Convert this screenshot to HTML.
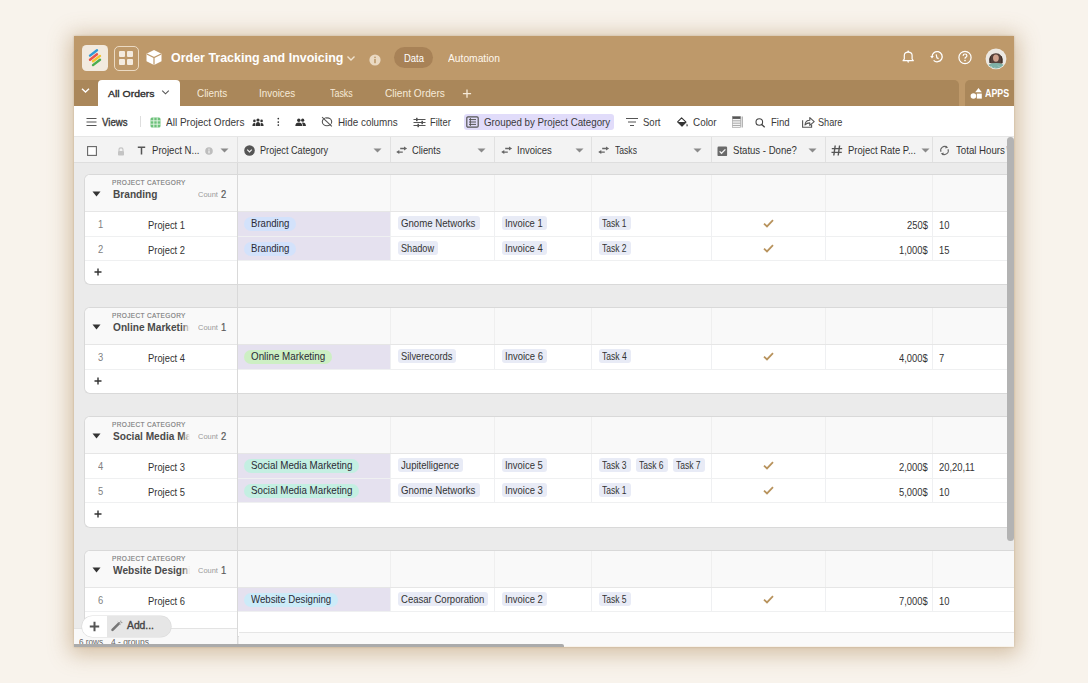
<!DOCTYPE html>
<html><head><meta charset="utf-8"><style>
*{margin:0;padding:0}
html,body{width:1088px;height:683px;overflow:hidden}
body{background:#f8f3ec;position:relative;font-family:"Liberation Sans", sans-serif}
.b{position:absolute}
.t{position:absolute;white-space:nowrap}
svg.b{overflow:visible}
</style></head><body>
<div class="b" style="left:74px;top:36px;width:940px;height:610.5px;box-shadow:0 3px 20px 4px rgba(165,122,70,.44),0 0 2px rgba(150,110,60,.35)"></div>
<div class="b" style="left:74px;top:36px;width:940px;height:610.5px;overflow:hidden">
<div class="b" style="left:-74px;top:-36px;width:1088px;height:683px">
<div class="b" style="left:74px;top:36px;width:940.00px;height:44.00px;background:#be996a"></div>
<div class="b" style="left:82px;top:45px;width:26.00px;height:26.00px;background:#f2eadf;border-radius:4.5px"></div>
<svg class="b" style="left:82px;top:45px" width="26" height="26" viewBox="0 0 26 26"><g stroke-linecap="round" stroke-width="2.4"><line x1="8" y1="10.6" x2="15" y2="5.3" stroke="#2f9ad6"/><line x1="8" y1="14.7" x2="15" y2="9.3" stroke="#e9544c"/><line x1="11" y1="16.3" x2="18" y2="10.9" stroke="#f3c430"/><line x1="11" y1="20.1" x2="18" y2="14.8" stroke="#4aad4f"/></g></svg>
<div class="b" style="left:114px;top:46px;width:25.00px;height:25.00px;border:1.3px solid rgba(250,240,225,.75);border-radius:5px;box-sizing:border-box"></div>
<div class="b" style="left:119px;top:51px;width:6.00px;height:6.00px;background:#f4ebdf;border-radius:1px"></div>
<div class="b" style="left:127px;top:51px;width:6.00px;height:6.00px;background:#f4ebdf;border-radius:1px"></div>
<div class="b" style="left:119px;top:58.5px;width:6.00px;height:6.00px;background:#f4ebdf;border-radius:1px"></div>
<div class="b" style="left:127px;top:58.5px;width:6.00px;height:6.00px;background:#f4ebdf;border-radius:1px"></div>
<svg class="b" style="left:145px;top:49px" width="18" height="17" viewBox="0 0 18 17"><path d="M9 1 L16.5 4.8 L16.5 12.3 L9 16 L1.5 12.3 L1.5 4.8 Z" fill="#fff"/><path d="M1.8 5 L9 8.6 L16.2 5 M9 8.6 L9 15.8" stroke="#be996a" stroke-width="1.2" fill="none"/></svg>
<div class="t" style="left:170.70px;top:52.14px;font-size:12.35px;line-height:12.35px;color:#fff;font-weight:700;transform:scaleX(1.0091);transform-origin:0 0;">Order Tracking and Invoicing</div>
<svg class="b" style="left:346px;top:55px" width="10" height="7" viewBox="0 0 10 7"><path d="M1.5 1.5 L5 5 L8.5 1.5" stroke="#f1e3cf" stroke-width="1.4" fill="none"/></svg>
<svg class="b" style="left:369px;top:54px" width="12" height="12" viewBox="0 0 12 12"><circle cx="6" cy="6" r="5.6" fill="#ead9c2"/><rect x="5.2" y="5" width="1.6" height="4.2" fill="#be996a"/><circle cx="6" cy="3.3" r="0.9" fill="#be996a"/></svg>
<div class="b" style="left:394px;top:47px;width:39.00px;height:21.00px;background:#a88257;border-radius:11px"></div>
<div class="t" style="left:403.70px;top:52.80px;font-size:10.76px;line-height:10.76px;color:#fff;transform:scaleX(0.8756);transform-origin:0 0;">Data</div>
<div class="t" style="left:448.40px;top:52.80px;font-size:10.76px;line-height:10.76px;color:#fff7ec;transform:scaleX(0.9538);transform-origin:0 0;">Automation</div>
<svg class="b" style="left:902px;top:50px" width="12" height="14" viewBox="0 0 12 14"><circle cx="6.2" cy="1.3" r="0.9" fill="#fff"/><path d="M2.3 9 V5.6 Q2.3 2.2 6.2 2.2 Q10.1 2.2 10.1 5.6 V9 L11.3 10.7 H1.1 Z" fill="none" stroke="#fff" stroke-width="1.2" stroke-linejoin="round"/><path d="M5 11.3 L6.2 12.9 L7.4 11.3 Z" fill="#fff"/></svg>
<svg class="b" style="left:930px;top:50px" width="14" height="14" viewBox="0 0 14 14"><path d="M2 6.8 A5.1 5.1 0 1 1 3.6 10.4" fill="none" stroke="#fff" stroke-width="1.3"/><path d="M0.2 5.9 L3.8 5.9 L2 8.4 Z" fill="#fff"/><path d="M6.2 4.4 L6.9 7.9 L8.6 8.6" fill="none" stroke="#fff" stroke-width="1.2"/></svg>
<svg class="b" style="left:958px;top:50px" width="14" height="15" viewBox="0 0 14 15"><circle cx="7" cy="7.5" r="6.1" fill="none" stroke="#fff" stroke-width="1.2"/><path d="M5.1 5.9 Q5.2 4 7 4 Q8.9 4 8.9 5.7 Q8.9 6.8 7.6 7.4 Q7 7.7 7 8.8" fill="none" stroke="#fff" stroke-width="1.2"/><circle cx="7" cy="10.6" r="0.8" fill="#fff"/></svg>
<svg class="b" style="left:985px;top:48px" width="22" height="22" viewBox="0 0 22 22"><defs><clipPath id="av"><circle cx="11" cy="10.9" r="9.6"/></clipPath></defs><circle cx="11" cy="10.9" r="10.4" fill="#f1ebe3"/><g clip-path="url(#av)"><rect width="22" height="22" fill="#ebe8e3"/><path d="M5 15 Q4 9.5 6.3 6.8 Q8.4 5 11.2 5.2 Q14.3 5.3 15.9 7.5 Q17.8 10.2 17.3 15.4 Q14.5 16 11 15.6 Q7.5 16 5 15 Z" fill="#54403a"/><path d="M5 15 Q4.2 11 5.6 8.5 M17 15 Q17.6 11 16.2 8.3" stroke="#3a2a22" stroke-width="1.2" fill="none"/><ellipse cx="10.9" cy="10.1" rx="2.9" ry="3.7" fill="#cfa28e"/><path d="M0.5 22 Q1.5 14.8 11 14.9 Q20.5 14.8 21.5 22 Z" fill="#7fb1a6"/><path d="M6 18 L8 20 M13 17.5 L15 19.5 M9.5 19 L11 21" stroke="#a9cfc6" stroke-width="0.8"/></g></svg>
<div class="b" style="left:74px;top:80px;width:940.00px;height:26.00px;background:#be996a"></div>
<div class="b" style="left:74px;top:80px;width:885.00px;height:26.00px;background:#aa875a;border-top-right-radius:5px"></div>
<div class="b" style="left:959px;top:80px;width:6.00px;height:26.00px;background:#be996a"></div>
<div class="b" style="left:965px;top:80px;width:49.00px;height:26.00px;background:#aa875a;border-top-left-radius:5px"></div>
<svg class="b" style="left:80px;top:87px" width="11" height="7" viewBox="0 0 11 7"><path d="M2 1.8 L5.5 5 L9 1.8" stroke="#fff" stroke-width="1.4" fill="none"/></svg>
<div class="b" style="left:98px;top:80px;width:82.00px;height:27.00px;background:#fff;border-radius:4px 4px 0 0"></div>
<div class="t" style="left:108.40px;top:88.83px;font-size:9.88px;line-height:9.88px;color:#2b2b2b;-webkit-text-stroke:0.35px #2b2b2b;transform:scaleX(1.0584);transform-origin:0 0;">All Orders</div>
<svg class="b" style="left:161px;top:89px" width="9" height="7" viewBox="0 0 9 7"><path d="M1.2 1.6 L4.5 4.8 L7.8 1.6" stroke="#555" stroke-width="1.1" fill="none"/></svg>
<div class="t" style="left:196.90px;top:89.31px;font-size:10.03px;line-height:10.03px;color:#f6ead8;transform:scaleX(0.9883);transform-origin:0 0;">Clients</div>
<div class="t" style="left:259.00px;top:89.31px;font-size:10.03px;line-height:10.03px;color:#f6ead8;transform:scaleX(0.9841);transform-origin:0 0;">Invoices</div>
<div class="t" style="left:330.30px;top:89.31px;font-size:10.03px;line-height:10.03px;color:#f6ead8;transform:scaleX(0.8894);transform-origin:0 0;">Tasks</div>
<div class="t" style="left:385.00px;top:89.31px;font-size:10.03px;line-height:10.03px;color:#f6ead8;transform:scaleX(1.0156);transform-origin:0 0;">Client Orders</div>
<svg class="b" style="left:462px;top:89px" width="10" height="10" viewBox="0 0 10 10"><path d="M5 0.6 V8.8 M0.9 4.7 H9.1" stroke="#f6ead8" stroke-width="1.3"/></svg>
<svg class="b" style="left:970px;top:87px" width="13" height="13" viewBox="0 0 13 13"><path d="M8.5 1 L11.8 5.3 L5.2 5.3 Z" fill="#fff"/><circle cx="3.4" cy="9" r="2.8" fill="#fff"/><rect x="6.8" y="6.6" width="5" height="5" fill="#fff"/></svg>
<div class="t" style="left:984.70px;top:89.11px;font-size:10.03px;line-height:10.03px;color:#fff;font-weight:700;transform:scaleX(0.8825);transform-origin:0 0;">APPS</div>
<div class="b" style="left:74px;top:106px;width:940.00px;height:31.00px;background:#fff"></div>
<div class="b" style="left:74px;top:136px;width:940.00px;height:1.00px;background:#e6e6e6"></div>
<svg class="b" style="left:86px;top:117px" width="11" height="10" viewBox="0 0 11 10"><path d="M0.5 1.5 H10.5 M0.5 5 H10.5 M0.5 8.5 H10.5" stroke="#555" stroke-width="1.2"/></svg>
<div class="t" style="left:102.20px;top:117.79px;font-size:10.17px;line-height:10.17px;color:#3a3a3a;-webkit-text-stroke:0.35px #3a3a3a;transform:scaleX(0.9498);transform-origin:0 0;">Views</div>
<div class="b" style="left:140px;top:116px;width:1.00px;height:11.00px;background:#dedede"></div>
<svg class="b" style="left:150px;top:116.5px" width="11" height="11" viewBox="0 0 11 11"><rect x="0.5" y="0.5" width="10" height="10" rx="1.5" fill="#6cc17a"/><path d="M3.8 0.5 V10.5 M7.2 0.5 V10.5 M0.5 3.8 H10.5 M0.5 7.2 H10.5" stroke="#e6f5e8" stroke-width="0.9"/></svg>
<div class="t" style="left:166.20px;top:117.79px;font-size:10.17px;line-height:10.17px;color:#3a3a3a;transform:scaleX(0.9859);transform-origin:0 0;">All Project Orders</div>
<svg class="b" style="left:251.5px;top:117.5px" width="12" height="9" viewBox="0 0 12 9"><circle cx="6" cy="2" r="1.6" fill="#333"/><circle cx="2.4" cy="2.9" r="1.3" fill="#333"/><circle cx="9.6" cy="2.9" r="1.3" fill="#333"/><path d="M3.6 8 Q3.8 4.1 6 4.1 Q8.2 4.1 8.4 8 Z M0.4 8 Q0.5 4.9 2.4 4.9 Q3.2 4.9 3.4 5.3 L3.1 8 Z M11.6 8 Q11.5 4.9 9.6 4.9 Q8.8 4.9 8.6 5.3 L8.9 8 Z" fill="#333"/></svg>
<svg class="b" style="left:276px;top:116px" width="5" height="12" viewBox="0 0 5 12"><circle cx="2.3" cy="2.6" r="0.85" fill="#333"/><circle cx="2.3" cy="6.1" r="0.85" fill="#333"/><circle cx="2.3" cy="9.1" r="0.85" fill="#333"/></svg>
<svg class="b" style="left:294.5px;top:117.5px" width="12" height="9" viewBox="0 0 12 9"><circle cx="3.8" cy="2.2" r="1.7" fill="#333"/><circle cx="7.7" cy="2.2" r="1.6" fill="#333"/><path d="M0.3 8 Q0.5 4.6 3.8 4.6 Q7.1 4.6 7.3 8 Z M7.9 8 Q7.8 5.6 6.9 4.8 Q7.3 4.6 7.9 4.6 Q10.6 4.6 11 8 Z" fill="#333"/></svg>
<svg class="b" style="left:321px;top:116px" width="12" height="12" viewBox="0 0 12 12"><ellipse cx="6" cy="5.8" rx="4.7" ry="3.9" fill="none" stroke="#555" stroke-width="1.1"/><path d="M1.1 1.1 L10.8 10.3" stroke="#555" stroke-width="1.1"/><path d="M1.1 1.1 L10.8 10.3" stroke="#fff" stroke-width="0.6" transform="translate(0.9,-0.9)"/></svg>
<div class="t" style="left:338.20px;top:117.79px;font-size:10.17px;line-height:10.17px;color:#3a3a3a;transform:scaleX(0.9702);transform-origin:0 0;">Hide columns</div>
<svg class="b" style="left:413px;top:116.5px" width="13" height="11" viewBox="0 0 13 11"><path d="M0.5 2.5 H12.5 M0.5 5.5 H12.5 M0.5 8.5 H12.5" stroke="#555" stroke-width="1.1"/><rect x="3" y="0.8" width="1.6" height="3.4" fill="#555"/><rect x="8.4" y="3.8" width="1.6" height="3.4" fill="#555"/><rect x="4.4" y="6.8" width="1.6" height="3.4" fill="#555"/></svg>
<div class="t" style="left:430.20px;top:117.79px;font-size:10.17px;line-height:10.17px;color:#3a3a3a;transform:scaleX(0.9200);transform-origin:0 0;">Filter</div>
<div class="b" style="left:464px;top:114px;width:150.00px;height:16.00px;background:#e1dcfa;border-radius:3px"></div>
<svg class="b" style="left:466px;top:116px" width="13" height="12" viewBox="0 0 13 12"><rect x="0.8" y="0.8" width="11.4" height="10.4" rx="1.2" fill="none" stroke="#555" stroke-width="1.2"/><path d="M3 3.6 H10 M3 6 H10 M3 8.4 H10" stroke="#555" stroke-width="1"/><path d="M4.4 2 V10" stroke="#555" stroke-width="0.9"/></svg>
<div class="t" style="left:484.10px;top:117.79px;font-size:10.17px;line-height:10.17px;color:#3a3a3a;transform:scaleX(0.9593);transform-origin:0 0;">Grouped by Project Category</div>
<svg class="b" style="left:625px;top:117px" width="14" height="10" viewBox="0 0 14 10"><path d="M1 1.5 H13 M3 5 H11 M5 8.5 H9" stroke="#555" stroke-width="1.2"/></svg>
<div class="t" style="left:643.00px;top:117.79px;font-size:10.17px;line-height:10.17px;color:#3a3a3a;transform:scaleX(0.9378);transform-origin:0 0;">Sort</div>
<svg class="b" style="left:677px;top:117px" width="12" height="10" viewBox="0 0 12 10"><path d="M4.6 0.8 L9 5.2 L5 9.2 L0.6 4.8 Z" fill="#fff" stroke="#333" stroke-width="1.1" stroke-linejoin="round"/><path d="M1 5 L8.8 5 L5 9 Z" fill="#333"/><path d="M9.8 6.6 Q10.9 8.2 10.7 8.8 Q10.4 9.6 9.8 9.4 Q9.1 9 9.8 6.6 Z" fill="#333"/></svg>
<div class="t" style="left:692.70px;top:117.79px;font-size:10.17px;line-height:10.17px;color:#3a3a3a;transform:scaleX(0.9746);transform-origin:0 0;">Color</div>
<svg class="b" style="left:731.5px;top:116px" width="11" height="12" viewBox="0 0 11 12"><rect x="0.5" y="0.5" width="8" height="11" fill="#f4f4f4" stroke="#aaa" stroke-width="0.7"/><rect x="0.5" y="0.5" width="8" height="2.4" fill="#555"/><path d="M0.5 4.8 H8.5 M0.5 7.2 H8.5 M0.5 9.5 H8.5" stroke="#999" stroke-width="0.8"/><path d="M10.2 0.5 V11.5" stroke="#888" stroke-width="0.9"/></svg>
<svg class="b" style="left:755px;top:117.5px" width="11" height="10" viewBox="0 0 11 10"><circle cx="4.3" cy="4" r="3.3" fill="none" stroke="#444" stroke-width="1.1"/><path d="M6.7 6.5 L9.7 9.2" stroke="#444" stroke-width="1.3"/></svg>
<div class="t" style="left:770.80px;top:117.79px;font-size:10.17px;line-height:10.17px;color:#3a3a3a;transform:scaleX(0.9450);transform-origin:0 0;">Find</div>
<svg class="b" style="left:801.5px;top:116px" width="13" height="12" viewBox="0 0 13 12"><path d="M0.6 4.2 V11.2 H9.6 V8.6" fill="none" stroke="#555" stroke-width="1.1"/><path d="M3 9 Q3.4 4.3 7.8 4.3 V1.6 L12.2 5.6 L7.8 9.4 V6.9 Q4.8 6.9 3 9 Z" fill="none" stroke="#555" stroke-width="1.1" stroke-linejoin="round"/></svg>
<div class="t" style="left:818.00px;top:117.79px;font-size:10.17px;line-height:10.17px;color:#3a3a3a;transform:scaleX(0.9025);transform-origin:0 0;">Share</div>
<div class="b" style="left:74px;top:137px;width:940.00px;height:25.00px;background:#f3f3f3"></div>
<div class="b" style="left:74px;top:162px;width:940.00px;height:1.00px;background:#dedede"></div>
<div class="b" style="left:237px;top:137px;width:1.00px;height:25.00px;background:#e1e1e1"></div>
<div class="b" style="left:390px;top:137px;width:1.00px;height:25.00px;background:#e1e1e1"></div>
<div class="b" style="left:494px;top:137px;width:1.00px;height:25.00px;background:#e1e1e1"></div>
<div class="b" style="left:591px;top:137px;width:1.00px;height:25.00px;background:#e1e1e1"></div>
<div class="b" style="left:711px;top:137px;width:1.00px;height:25.00px;background:#e1e1e1"></div>
<div class="b" style="left:825px;top:137px;width:1.00px;height:25.00px;background:#e1e1e1"></div>
<div class="b" style="left:932px;top:137px;width:1.00px;height:25.00px;background:#e1e1e1"></div>
<svg class="b" style="left:87px;top:146px" width="10" height="10" viewBox="0 0 10 10"><rect x="0.6" y="0.6" width="8.8" height="8.8" fill="#fff" stroke="#666" stroke-width="1.1"/></svg>
<svg class="b" style="left:117px;top:147px" width="8" height="9" viewBox="0 0 8 9"><path d="M2 4 V2.8 Q2 0.9 4 0.9 Q6 0.9 6 2.8 V4" fill="none" stroke="#c4c4c4" stroke-width="1.1"/><rect x="1" y="4" width="6" height="4.5" rx="0.8" fill="#c4c4c4"/></svg>
<svg class="b" style="left:137px;top:146px" width="9" height="9" viewBox="0 0 9 9"><path d="M0.8 1.2 H8.2 M4.5 1.2 V8.5" stroke="#555" stroke-width="1.5"/></svg>
<div class="t" style="left:152.40px;top:145.79px;font-size:10.17px;line-height:10.17px;color:#333;transform:scaleX(0.9459);transform-origin:0 0;">Project N...</div>
<svg class="b" style="left:204.5px;top:146.5px" width="8" height="8" viewBox="0 0 8 8"><circle cx="4" cy="4" r="3.8" fill="#bdbdbd"/><rect x="3.4" y="3.5" width="1.2" height="2.8" fill="#f3f3f3"/><circle cx="4" cy="2.2" r="0.65" fill="#f3f3f3"/></svg>
<svg class="b" style="left:220px;top:148.3px" width="9" height="5" viewBox="0 0 9 5"><path d="M0.5 0.5 H8.5 L4.5 4.5 Z" fill="#8a8a8a"/></svg>
<svg class="b" style="left:243.5px;top:145px" width="11" height="11" viewBox="0 0 11 11"><circle cx="5.5" cy="5.5" r="5.3" fill="#555"/><path d="M3.2 4.6 L5.5 6.9 L7.8 4.6" fill="none" stroke="#f3f3f3" stroke-width="1.2"/></svg>
<div class="t" style="left:259.90px;top:145.79px;font-size:10.17px;line-height:10.17px;color:#333;transform:scaleX(0.9000);transform-origin:0 0;">Project Category</div>
<svg class="b" style="left:372.5px;top:148.3px" width="9" height="5" viewBox="0 0 9 5"><path d="M0.5 0.5 H8.5 L4.5 4.5 Z" fill="#8a8a8a"/></svg>
<svg class="b" style="left:395px;top:145px" width="13" height="10" viewBox="0 0 13 10"><path d="M9 1.5 L12.1 3.5 L9 5.5 Z M4.3 5.1 L1.2 7.1 L4.3 9.1 Z" fill="#666"/><path d="M5.2 3.5 H9.5 M3.8 7.1 H7.8" stroke="#666" stroke-width="1.4"/></svg>
<div class="t" style="left:412.40px;top:145.79px;font-size:10.17px;line-height:10.17px;color:#333;transform:scaleX(0.9195);transform-origin:0 0;">Clients</div>
<svg class="b" style="left:476.5px;top:148.3px" width="9" height="5" viewBox="0 0 9 5"><path d="M0.5 0.5 H8.5 L4.5 4.5 Z" fill="#8a8a8a"/></svg>
<svg class="b" style="left:499.5px;top:145px" width="13" height="10" viewBox="0 0 13 10"><path d="M9 1.5 L12.1 3.5 L9 5.5 Z M4.3 5.1 L1.2 7.1 L4.3 9.1 Z" fill="#666"/><path d="M5.2 3.5 H9.5 M3.8 7.1 H7.8" stroke="#666" stroke-width="1.4"/></svg>
<div class="t" style="left:516.90px;top:145.79px;font-size:10.17px;line-height:10.17px;color:#333;transform:scaleX(0.9325);transform-origin:0 0;">Invoices</div>
<svg class="b" style="left:574.5px;top:148.3px" width="9" height="5" viewBox="0 0 9 5"><path d="M0.5 0.5 H8.5 L4.5 4.5 Z" fill="#8a8a8a"/></svg>
<svg class="b" style="left:597px;top:145px" width="13" height="10" viewBox="0 0 13 10"><path d="M9 1.5 L12.1 3.5 L9 5.5 Z M4.3 5.1 L1.2 7.1 L4.3 9.1 Z" fill="#666"/><path d="M5.2 3.5 H9.5 M3.8 7.1 H7.8" stroke="#666" stroke-width="1.4"/></svg>
<div class="t" style="left:614.60px;top:145.79px;font-size:10.17px;line-height:10.17px;color:#333;transform:scaleX(0.8460);transform-origin:0 0;">Tasks</div>
<svg class="b" style="left:693px;top:148.3px" width="9" height="5" viewBox="0 0 9 5"><path d="M0.5 0.5 H8.5 L4.5 4.5 Z" fill="#8a8a8a"/></svg>
<svg class="b" style="left:717px;top:146px" width="11" height="11" viewBox="0 0 11 11"><rect x="0.5" y="0.5" width="9.6" height="9.6" rx="1.2" fill="#6a6a6a"/><path d="M2.6 5.4 L4.5 7.3 L8.4 3.4" fill="none" stroke="#f3f3f3" stroke-width="1.3"/></svg>
<div class="t" style="left:733.40px;top:145.79px;font-size:10.17px;line-height:10.17px;color:#333;transform:scaleX(0.9431);transform-origin:0 0;">Status - Done?</div>
<svg class="b" style="left:807.5px;top:148.3px" width="9" height="5" viewBox="0 0 9 5"><path d="M0.5 0.5 H8.5 L4.5 4.5 Z" fill="#8a8a8a"/></svg>
<svg class="b" style="left:831px;top:145px" width="12" height="11" viewBox="0 0 12 11"><path d="M4.2 0.5 L2.8 10.5 M8.6 0.5 L7.2 10.5 M0.8 3.6 H11.2 M0.5 7.4 H10.8" stroke="#555" stroke-width="1.4"/></svg>
<div class="t" style="left:847.60px;top:145.79px;font-size:10.17px;line-height:10.17px;color:#333;transform:scaleX(0.9345);transform-origin:0 0;">Project Rate P...</div>
<svg class="b" style="left:921px;top:148.3px" width="9" height="5" viewBox="0 0 9 5"><path d="M0.5 0.5 H8.5 L4.5 4.5 Z" fill="#8a8a8a"/></svg>
<svg class="b" style="left:939px;top:145px" width="11" height="11" viewBox="0 0 11 11"><path d="M2 6.8 A3.8 3.8 0 0 1 7.8 2.3 M9 4.2 A3.8 3.8 0 0 1 3.2 8.7" fill="none" stroke="#666" stroke-width="1.1"/><path d="M6.8 0.6 L9.2 2.6 L6.4 3.6 Z M4.2 10.4 L1.8 8.4 L4.6 7.4 Z" fill="#666"/></svg>
<div class="t" style="left:955.70px;top:145.79px;font-size:10.17px;line-height:10.17px;color:#333;transform:scaleX(0.9522);transform-origin:0 0;">Total Hours</div>
<div class="t" style="left:1006.00px;top:145.79px;font-size:10.17px;line-height:10.17px;color:#bbb;transform:scaleX(0.9000);transform-origin:0 0;">W</div>
<div class="b" style="left:74px;top:163px;width:940.00px;height:483.00px;background:#ebebeb"></div>
<div class="b" style="left:84px;top:174px;width:940px;height:111px;background:#fff;border:1px solid #d9d9d9;border-right:none;border-radius:6px 0 0 6px;box-sizing:border-box;overflow:hidden"><div class="b" style="left:0;top:0;width:100%;height:37px;background:#f9f9f9;border-bottom:1px solid #e6e6e6;box-sizing:border-box"></div></div>
<div class="b" style="left:390px;top:175px;width:1.00px;height:36.00px;background:#efefef"></div>
<div class="b" style="left:390px;top:212px;width:1.00px;height:48.00px;background:#eff0f2"></div>
<div class="b" style="left:494px;top:175px;width:1.00px;height:36.00px;background:#efefef"></div>
<div class="b" style="left:494px;top:212px;width:1.00px;height:48.00px;background:#eff0f2"></div>
<div class="b" style="left:591px;top:175px;width:1.00px;height:36.00px;background:#efefef"></div>
<div class="b" style="left:591px;top:212px;width:1.00px;height:48.00px;background:#eff0f2"></div>
<div class="b" style="left:711px;top:175px;width:1.00px;height:36.00px;background:#efefef"></div>
<div class="b" style="left:711px;top:212px;width:1.00px;height:48.00px;background:#eff0f2"></div>
<div class="b" style="left:825px;top:175px;width:1.00px;height:36.00px;background:#efefef"></div>
<div class="b" style="left:825px;top:212px;width:1.00px;height:48.00px;background:#eff0f2"></div>
<div class="b" style="left:932px;top:175px;width:1.00px;height:36.00px;background:#efefef"></div>
<div class="b" style="left:932px;top:212px;width:1.00px;height:48.00px;background:#eff0f2"></div>
<svg class="b" style="left:91.7px;top:191px" width="9" height="6" viewBox="0 0 9 6"><path d="M0.5 0.5 H8.5 L4.5 5.5 Z" fill="#333"/></svg>
<div class="t" style="left:112.40px;top:179.19px;font-size:6.98px;line-height:6.98px;color:#7c7c7c;-webkit-text-stroke:0.15px #7c7c7c;letter-spacing:0.4px;transform:scaleX(0.9318);transform-origin:0 0;">PROJECT CATEGORY</div>
<div class="b" style="left:108px;top:188px;width:84px;height:16px;overflow:hidden">
<div class="t" style="left:4.50px;top:0.57px;font-size:10.90px;line-height:10.90px;color:#4a4a4a;font-weight:700;transform:scaleX(0.93);transform-origin:0 0">Branding</div>
</div>
<div class="t" style="left:197.60px;top:191.40px;font-size:7.56px;line-height:7.56px;color:#9a9a9a;transform:scaleX(0.9869);transform-origin:0 0;">Count</div>
<div class="t" style="left:221.20px;top:189.54px;font-size:10.47px;line-height:10.47px;color:#5a5a5a;-webkit-text-stroke:0.2px #5a5a5a;transform:scaleX(0.9000);transform-origin:0 0;">2</div>
<div class="b" style="left:85px;top:236px;width:929.00px;height:1.00px;background:#eff0f1"></div>
<div class="b" style="left:238px;top:212px;width:152.00px;height:24.00px;background:#e5e1ef"></div>
<div class="t" style="left:98.19px;top:219.86px;font-size:10.32px;line-height:10.32px;color:#808080;transform:scaleX(0.9100);transform-origin:0 0;">1</div>
<div class="t" style="left:148.30px;top:220.86px;font-size:10.32px;line-height:10.32px;color:#333;transform:scaleX(0.9100);transform-origin:0 0;">Project 1</div>
<div class="b" style="left:244px;top:216.7px;width:52.20px;height:14.00px;background:#d3e2fb;border-radius:7px"></div>
<div class="t" style="left:250.80px;top:219.46px;font-size:10.32px;line-height:10.32px;color:#2a2a35;transform:scaleX(0.9296);transform-origin:0 0;">Branding</div>
<div class="b" style="left:397.7px;top:216.3px;width:81.90px;height:14.00px;background:#e8ebf6;border-radius:3px"></div>
<div class="t" style="left:401.40px;top:219.46px;font-size:10.32px;line-height:10.32px;color:#333;transform:scaleX(0.9345);transform-origin:0 0;">Gnome Networks</div>
<div class="b" style="left:501.7px;top:216.3px;width:45.10px;height:14.00px;background:#e8ebf6;border-radius:3px"></div>
<div class="t" style="left:505.40px;top:219.46px;font-size:10.32px;line-height:10.32px;color:#333;transform:scaleX(0.9128);transform-origin:0 0;">Invoice 1</div>
<div class="b" style="left:598.7px;top:216.3px;width:32.00px;height:14.00px;background:#e8ebf6;border-radius:3px"></div>
<div class="t" style="left:602.40px;top:219.46px;font-size:10.32px;line-height:10.32px;color:#333;transform:scaleX(0.8248);transform-origin:0 0;">Task 1</div>
<svg class="b" style="left:763px;top:219.1px" width="11" height="9" viewBox="0 0 11 9"><path d="M1 4.6 L4 7.4 L10 1.2" fill="none" stroke="#b8935d" stroke-width="1.8"/></svg>
<div class="t" style="left:907.11px;top:220.86px;font-size:10.32px;line-height:10.32px;color:#333;transform:scaleX(0.9100);transform-origin:0 0;">250$</div>
<div class="t" style="left:938.60px;top:220.86px;font-size:10.32px;line-height:10.32px;color:#333;transform:scaleX(0.9100);transform-origin:0 0;">10</div>
<div class="b" style="left:85px;top:260px;width:929.00px;height:1.00px;background:#eff0f1"></div>
<div class="b" style="left:238px;top:237px;width:152.00px;height:23.00px;background:#e5e1ef"></div>
<div class="t" style="left:98.19px;top:244.86px;font-size:10.32px;line-height:10.32px;color:#808080;transform:scaleX(0.9100);transform-origin:0 0;">2</div>
<div class="t" style="left:148.30px;top:245.86px;font-size:10.32px;line-height:10.32px;color:#333;transform:scaleX(0.9100);transform-origin:0 0;">Project 2</div>
<div class="b" style="left:244px;top:241.7px;width:52.20px;height:14.00px;background:#d3e2fb;border-radius:7px"></div>
<div class="t" style="left:250.80px;top:244.46px;font-size:10.32px;line-height:10.32px;color:#2a2a35;transform:scaleX(0.9296);transform-origin:0 0;">Branding</div>
<div class="b" style="left:397.7px;top:241.3px;width:40.50px;height:14.00px;background:#e8ebf6;border-radius:3px"></div>
<div class="t" style="left:401.40px;top:244.46px;font-size:10.32px;line-height:10.32px;color:#333;transform:scaleX(0.8868);transform-origin:0 0;">Shadow</div>
<div class="b" style="left:501.7px;top:241.3px;width:45.10px;height:14.00px;background:#e8ebf6;border-radius:3px"></div>
<div class="t" style="left:505.40px;top:244.46px;font-size:10.32px;line-height:10.32px;color:#333;transform:scaleX(0.9128);transform-origin:0 0;">Invoice 4</div>
<div class="b" style="left:598.7px;top:241.3px;width:32.00px;height:14.00px;background:#e8ebf6;border-radius:3px"></div>
<div class="t" style="left:602.40px;top:244.46px;font-size:10.32px;line-height:10.32px;color:#333;transform:scaleX(0.8248);transform-origin:0 0;">Task 2</div>
<svg class="b" style="left:763px;top:244.1px" width="11" height="9" viewBox="0 0 11 9"><path d="M1 4.6 L4 7.4 L10 1.2" fill="none" stroke="#b8935d" stroke-width="1.8"/></svg>
<div class="t" style="left:899.27px;top:245.86px;font-size:10.32px;line-height:10.32px;color:#333;transform:scaleX(0.9100);transform-origin:0 0;">1,000$</div>
<div class="t" style="left:938.60px;top:245.86px;font-size:10.32px;line-height:10.32px;color:#333;transform:scaleX(0.9100);transform-origin:0 0;">15</div>
<svg class="b" style="left:94px;top:268px" width="8" height="8" viewBox="0 0 8 8"><path d="M4 0.5 V7.5 M0.5 4 H7.5" stroke="#333" stroke-width="1.4"/></svg>
<div class="b" style="left:84px;top:307px;width:940px;height:87px;background:#fff;border:1px solid #d9d9d9;border-right:none;border-radius:6px 0 0 6px;box-sizing:border-box;overflow:hidden"><div class="b" style="left:0;top:0;width:100%;height:37px;background:#f9f9f9;border-bottom:1px solid #e6e6e6;box-sizing:border-box"></div></div>
<div class="b" style="left:390px;top:308px;width:1.00px;height:36.00px;background:#efefef"></div>
<div class="b" style="left:390px;top:345px;width:1.00px;height:24.00px;background:#eff0f2"></div>
<div class="b" style="left:494px;top:308px;width:1.00px;height:36.00px;background:#efefef"></div>
<div class="b" style="left:494px;top:345px;width:1.00px;height:24.00px;background:#eff0f2"></div>
<div class="b" style="left:591px;top:308px;width:1.00px;height:36.00px;background:#efefef"></div>
<div class="b" style="left:591px;top:345px;width:1.00px;height:24.00px;background:#eff0f2"></div>
<div class="b" style="left:711px;top:308px;width:1.00px;height:36.00px;background:#efefef"></div>
<div class="b" style="left:711px;top:345px;width:1.00px;height:24.00px;background:#eff0f2"></div>
<div class="b" style="left:825px;top:308px;width:1.00px;height:36.00px;background:#efefef"></div>
<div class="b" style="left:825px;top:345px;width:1.00px;height:24.00px;background:#eff0f2"></div>
<div class="b" style="left:932px;top:308px;width:1.00px;height:36.00px;background:#efefef"></div>
<div class="b" style="left:932px;top:345px;width:1.00px;height:24.00px;background:#eff0f2"></div>
<svg class="b" style="left:91.7px;top:324px" width="9" height="6" viewBox="0 0 9 6"><path d="M0.5 0.5 H8.5 L4.5 5.5 Z" fill="#333"/></svg>
<div class="t" style="left:112.40px;top:312.19px;font-size:6.98px;line-height:6.98px;color:#7c7c7c;-webkit-text-stroke:0.15px #7c7c7c;letter-spacing:0.4px;transform:scaleX(0.9318);transform-origin:0 0;">PROJECT CATEGORY</div>
<div class="b" style="left:108px;top:321px;width:84px;height:16px;overflow:hidden">
<div class="t" style="left:4.50px;top:0.57px;font-size:10.90px;line-height:10.90px;color:#4a4a4a;font-weight:700;transform:scaleX(0.93);transform-origin:0 0">Online Marketing</div>
<div class="b" style="left:74px;top:0;width:10px;height:16px;background:linear-gradient(90deg,rgba(249,249,249,0),#f9f9f9 80%)"></div>
</div>
<div class="t" style="left:197.60px;top:324.40px;font-size:7.56px;line-height:7.56px;color:#9a9a9a;transform:scaleX(0.9869);transform-origin:0 0;">Count</div>
<div class="t" style="left:221.20px;top:322.54px;font-size:10.47px;line-height:10.47px;color:#5a5a5a;-webkit-text-stroke:0.2px #5a5a5a;transform:scaleX(0.9000);transform-origin:0 0;">1</div>
<div class="b" style="left:85px;top:369px;width:929.00px;height:1.00px;background:#eff0f1"></div>
<div class="b" style="left:238px;top:345px;width:152.00px;height:24.00px;background:#e5e1ef"></div>
<div class="t" style="left:98.19px;top:352.86px;font-size:10.32px;line-height:10.32px;color:#808080;transform:scaleX(0.9100);transform-origin:0 0;">3</div>
<div class="t" style="left:148.30px;top:353.86px;font-size:10.32px;line-height:10.32px;color:#333;transform:scaleX(0.9100);transform-origin:0 0;">Project 4</div>
<div class="b" style="left:244px;top:349.7px;width:88.00px;height:14.00px;background:#cdefc4;border-radius:7px"></div>
<div class="t" style="left:250.80px;top:352.46px;font-size:10.32px;line-height:10.32px;color:#2a2a35;transform:scaleX(0.9512);transform-origin:0 0;">Online Marketing</div>
<div class="b" style="left:397.7px;top:349.3px;width:58.80px;height:14.00px;background:#e8ebf6;border-radius:3px"></div>
<div class="t" style="left:401.40px;top:352.46px;font-size:10.32px;line-height:10.32px;color:#333;transform:scaleX(0.9053);transform-origin:0 0;">Silverecords</div>
<div class="b" style="left:501.7px;top:349.3px;width:45.40px;height:14.00px;background:#e8ebf6;border-radius:3px"></div>
<div class="t" style="left:505.40px;top:352.46px;font-size:10.32px;line-height:10.32px;color:#333;transform:scaleX(0.9201);transform-origin:0 0;">Invoice 6</div>
<div class="b" style="left:598.7px;top:349.3px;width:32.20px;height:14.00px;background:#e8ebf6;border-radius:3px"></div>
<div class="t" style="left:602.40px;top:352.46px;font-size:10.32px;line-height:10.32px;color:#333;transform:scaleX(0.8315);transform-origin:0 0;">Task 4</div>
<svg class="b" style="left:763px;top:352.1px" width="11" height="9" viewBox="0 0 11 9"><path d="M1 4.6 L4 7.4 L10 1.2" fill="none" stroke="#b8935d" stroke-width="1.8"/></svg>
<div class="t" style="left:899.27px;top:353.86px;font-size:10.32px;line-height:10.32px;color:#333;transform:scaleX(0.9100);transform-origin:0 0;">4,000$</div>
<div class="t" style="left:938.60px;top:353.86px;font-size:10.32px;line-height:10.32px;color:#333;transform:scaleX(0.9100);transform-origin:0 0;">7</div>
<svg class="b" style="left:94px;top:377px" width="8" height="8" viewBox="0 0 8 8"><path d="M4 0.5 V7.5 M0.5 4 H7.5" stroke="#333" stroke-width="1.4"/></svg>
<div class="b" style="left:84px;top:416px;width:940px;height:112px;background:#fff;border:1px solid #d9d9d9;border-right:none;border-radius:6px 0 0 6px;box-sizing:border-box;overflow:hidden"><div class="b" style="left:0;top:0;width:100%;height:37px;background:#f9f9f9;border-bottom:1px solid #e6e6e6;box-sizing:border-box"></div></div>
<div class="b" style="left:390px;top:417px;width:1.00px;height:36.00px;background:#efefef"></div>
<div class="b" style="left:390px;top:454px;width:1.00px;height:48.00px;background:#eff0f2"></div>
<div class="b" style="left:494px;top:417px;width:1.00px;height:36.00px;background:#efefef"></div>
<div class="b" style="left:494px;top:454px;width:1.00px;height:48.00px;background:#eff0f2"></div>
<div class="b" style="left:591px;top:417px;width:1.00px;height:36.00px;background:#efefef"></div>
<div class="b" style="left:591px;top:454px;width:1.00px;height:48.00px;background:#eff0f2"></div>
<div class="b" style="left:711px;top:417px;width:1.00px;height:36.00px;background:#efefef"></div>
<div class="b" style="left:711px;top:454px;width:1.00px;height:48.00px;background:#eff0f2"></div>
<div class="b" style="left:825px;top:417px;width:1.00px;height:36.00px;background:#efefef"></div>
<div class="b" style="left:825px;top:454px;width:1.00px;height:48.00px;background:#eff0f2"></div>
<div class="b" style="left:932px;top:417px;width:1.00px;height:36.00px;background:#efefef"></div>
<div class="b" style="left:932px;top:454px;width:1.00px;height:48.00px;background:#eff0f2"></div>
<svg class="b" style="left:91.7px;top:433px" width="9" height="6" viewBox="0 0 9 6"><path d="M0.5 0.5 H8.5 L4.5 5.5 Z" fill="#333"/></svg>
<div class="t" style="left:112.40px;top:421.19px;font-size:6.98px;line-height:6.98px;color:#7c7c7c;-webkit-text-stroke:0.15px #7c7c7c;letter-spacing:0.4px;transform:scaleX(0.9318);transform-origin:0 0;">PROJECT CATEGORY</div>
<div class="b" style="left:108px;top:430px;width:84px;height:16px;overflow:hidden">
<div class="t" style="left:4.50px;top:0.57px;font-size:10.90px;line-height:10.90px;color:#4a4a4a;font-weight:700;transform:scaleX(0.93);transform-origin:0 0">Social Media Marketing</div>
<div class="b" style="left:74px;top:0;width:10px;height:16px;background:linear-gradient(90deg,rgba(249,249,249,0),#f9f9f9 80%)"></div>
</div>
<div class="t" style="left:197.60px;top:433.40px;font-size:7.56px;line-height:7.56px;color:#9a9a9a;transform:scaleX(0.9869);transform-origin:0 0;">Count</div>
<div class="t" style="left:221.20px;top:431.54px;font-size:10.47px;line-height:10.47px;color:#5a5a5a;-webkit-text-stroke:0.2px #5a5a5a;transform:scaleX(0.9000);transform-origin:0 0;">2</div>
<div class="b" style="left:85px;top:478px;width:929.00px;height:1.00px;background:#eff0f1"></div>
<div class="b" style="left:238px;top:454px;width:152.00px;height:24.00px;background:#e5e1ef"></div>
<div class="t" style="left:98.19px;top:461.86px;font-size:10.32px;line-height:10.32px;color:#808080;transform:scaleX(0.9100);transform-origin:0 0;">4</div>
<div class="t" style="left:148.30px;top:462.86px;font-size:10.32px;line-height:10.32px;color:#333;transform:scaleX(0.9100);transform-origin:0 0;">Project 3</div>
<div class="b" style="left:244px;top:458.7px;width:115.30px;height:14.00px;background:#c4efe2;border-radius:7px"></div>
<div class="t" style="left:250.80px;top:461.46px;font-size:10.32px;line-height:10.32px;color:#2a2a35;transform:scaleX(0.9463);transform-origin:0 0;">Social Media Marketing</div>
<div class="b" style="left:397.7px;top:458.3px;width:65.60px;height:14.00px;background:#e8ebf6;border-radius:3px"></div>
<div class="t" style="left:401.40px;top:461.46px;font-size:10.32px;line-height:10.32px;color:#333;transform:scaleX(0.9306);transform-origin:0 0;">Jupitelligence</div>
<div class="b" style="left:501.7px;top:458.3px;width:45.20px;height:14.00px;background:#e8ebf6;border-radius:3px"></div>
<div class="t" style="left:505.40px;top:461.46px;font-size:10.32px;line-height:10.32px;color:#333;transform:scaleX(0.9153);transform-origin:0 0;">Invoice 5</div>
<div class="b" style="left:598.7px;top:458.3px;width:32.00px;height:14.00px;background:#e8ebf6;border-radius:3px"></div>
<div class="t" style="left:602.40px;top:461.46px;font-size:10.32px;line-height:10.32px;color:#333;transform:scaleX(0.8248);transform-origin:0 0;">Task 3</div>
<div class="b" style="left:635.7px;top:458.3px;width:32.00px;height:14.00px;background:#e8ebf6;border-radius:3px"></div>
<div class="t" style="left:639.40px;top:461.46px;font-size:10.32px;line-height:10.32px;color:#333;transform:scaleX(0.8248);transform-origin:0 0;">Task 6</div>
<div class="b" style="left:672.7px;top:458.3px;width:32.00px;height:14.00px;background:#e8ebf6;border-radius:3px"></div>
<div class="t" style="left:676.40px;top:461.46px;font-size:10.32px;line-height:10.32px;color:#333;transform:scaleX(0.8248);transform-origin:0 0;">Task 7</div>
<svg class="b" style="left:763px;top:461.1px" width="11" height="9" viewBox="0 0 11 9"><path d="M1 4.6 L4 7.4 L10 1.2" fill="none" stroke="#b8935d" stroke-width="1.8"/></svg>
<div class="t" style="left:899.27px;top:462.86px;font-size:10.32px;line-height:10.32px;color:#333;transform:scaleX(0.9100);transform-origin:0 0;">2,000$</div>
<div class="t" style="left:938.60px;top:462.86px;font-size:10.32px;line-height:10.32px;color:#333;transform:scaleX(0.9100);transform-origin:0 0;">20,20,11</div>
<div class="b" style="left:85px;top:502px;width:929.00px;height:1.00px;background:#eff0f1"></div>
<div class="b" style="left:238px;top:479px;width:152.00px;height:23.00px;background:#e5e1ef"></div>
<div class="t" style="left:98.19px;top:486.86px;font-size:10.32px;line-height:10.32px;color:#808080;transform:scaleX(0.9100);transform-origin:0 0;">5</div>
<div class="t" style="left:148.30px;top:487.86px;font-size:10.32px;line-height:10.32px;color:#333;transform:scaleX(0.9100);transform-origin:0 0;">Project 5</div>
<div class="b" style="left:244px;top:483.7px;width:115.30px;height:14.00px;background:#c4efe2;border-radius:7px"></div>
<div class="t" style="left:250.80px;top:486.46px;font-size:10.32px;line-height:10.32px;color:#2a2a35;transform:scaleX(0.9463);transform-origin:0 0;">Social Media Marketing</div>
<div class="b" style="left:397.7px;top:483.3px;width:81.90px;height:14.00px;background:#e8ebf6;border-radius:3px"></div>
<div class="t" style="left:401.40px;top:486.46px;font-size:10.32px;line-height:10.32px;color:#333;transform:scaleX(0.9345);transform-origin:0 0;">Gnome Networks</div>
<div class="b" style="left:501.7px;top:483.3px;width:45.20px;height:14.00px;background:#e8ebf6;border-radius:3px"></div>
<div class="t" style="left:505.40px;top:486.46px;font-size:10.32px;line-height:10.32px;color:#333;transform:scaleX(0.9153);transform-origin:0 0;">Invoice 3</div>
<div class="b" style="left:598.7px;top:483.3px;width:32.00px;height:14.00px;background:#e8ebf6;border-radius:3px"></div>
<div class="t" style="left:602.40px;top:486.46px;font-size:10.32px;line-height:10.32px;color:#333;transform:scaleX(0.8248);transform-origin:0 0;">Task 1</div>
<svg class="b" style="left:763px;top:486.1px" width="11" height="9" viewBox="0 0 11 9"><path d="M1 4.6 L4 7.4 L10 1.2" fill="none" stroke="#b8935d" stroke-width="1.8"/></svg>
<div class="t" style="left:899.27px;top:487.86px;font-size:10.32px;line-height:10.32px;color:#333;transform:scaleX(0.9100);transform-origin:0 0;">5,000$</div>
<div class="t" style="left:938.60px;top:487.86px;font-size:10.32px;line-height:10.32px;color:#333;transform:scaleX(0.9100);transform-origin:0 0;">10</div>
<svg class="b" style="left:94px;top:510px" width="8" height="8" viewBox="0 0 8 8"><path d="M4 0.5 V7.5 M0.5 4 H7.5" stroke="#333" stroke-width="1.4"/></svg>
<div class="b" style="left:84px;top:550px;width:940px;height:87px;background:#fff;border:1px solid #d9d9d9;border-right:none;border-radius:6px 0 0 6px;box-sizing:border-box;overflow:hidden"><div class="b" style="left:0;top:0;width:100%;height:37px;background:#f9f9f9;border-bottom:1px solid #e6e6e6;box-sizing:border-box"></div></div>
<div class="b" style="left:390px;top:551px;width:1.00px;height:36.00px;background:#efefef"></div>
<div class="b" style="left:390px;top:588px;width:1.00px;height:23.00px;background:#eff0f2"></div>
<div class="b" style="left:494px;top:551px;width:1.00px;height:36.00px;background:#efefef"></div>
<div class="b" style="left:494px;top:588px;width:1.00px;height:23.00px;background:#eff0f2"></div>
<div class="b" style="left:591px;top:551px;width:1.00px;height:36.00px;background:#efefef"></div>
<div class="b" style="left:591px;top:588px;width:1.00px;height:23.00px;background:#eff0f2"></div>
<div class="b" style="left:711px;top:551px;width:1.00px;height:36.00px;background:#efefef"></div>
<div class="b" style="left:711px;top:588px;width:1.00px;height:23.00px;background:#eff0f2"></div>
<div class="b" style="left:825px;top:551px;width:1.00px;height:36.00px;background:#efefef"></div>
<div class="b" style="left:825px;top:588px;width:1.00px;height:23.00px;background:#eff0f2"></div>
<div class="b" style="left:932px;top:551px;width:1.00px;height:36.00px;background:#efefef"></div>
<div class="b" style="left:932px;top:588px;width:1.00px;height:23.00px;background:#eff0f2"></div>
<svg class="b" style="left:91.7px;top:567px" width="9" height="6" viewBox="0 0 9 6"><path d="M0.5 0.5 H8.5 L4.5 5.5 Z" fill="#333"/></svg>
<div class="t" style="left:112.40px;top:555.19px;font-size:6.98px;line-height:6.98px;color:#7c7c7c;-webkit-text-stroke:0.15px #7c7c7c;letter-spacing:0.4px;transform:scaleX(0.9318);transform-origin:0 0;">PROJECT CATEGORY</div>
<div class="b" style="left:108px;top:564px;width:84px;height:16px;overflow:hidden">
<div class="t" style="left:4.50px;top:0.57px;font-size:10.90px;line-height:10.90px;color:#4a4a4a;font-weight:700;transform:scaleX(0.93);transform-origin:0 0">Website Designing</div>
<div class="b" style="left:74px;top:0;width:10px;height:16px;background:linear-gradient(90deg,rgba(249,249,249,0),#f9f9f9 80%)"></div>
</div>
<div class="t" style="left:197.60px;top:567.40px;font-size:7.56px;line-height:7.56px;color:#9a9a9a;transform:scaleX(0.9869);transform-origin:0 0;">Count</div>
<div class="t" style="left:221.20px;top:565.54px;font-size:10.47px;line-height:10.47px;color:#5a5a5a;-webkit-text-stroke:0.2px #5a5a5a;transform:scaleX(0.9000);transform-origin:0 0;">1</div>
<div class="b" style="left:85px;top:611px;width:929.00px;height:1.00px;background:#eff0f1"></div>
<div class="b" style="left:238px;top:588px;width:152.00px;height:23.00px;background:#e5e1ef"></div>
<div class="t" style="left:98.19px;top:595.86px;font-size:10.32px;line-height:10.32px;color:#808080;transform:scaleX(0.9100);transform-origin:0 0;">6</div>
<div class="t" style="left:148.30px;top:596.86px;font-size:10.32px;line-height:10.32px;color:#333;transform:scaleX(0.9100);transform-origin:0 0;">Project 6</div>
<div class="b" style="left:244px;top:592.7px;width:94.00px;height:14.00px;background:#ccebf8;border-radius:7px"></div>
<div class="t" style="left:250.80px;top:595.46px;font-size:10.32px;line-height:10.32px;color:#2a2a35;transform:scaleX(0.9342);transform-origin:0 0;">Website Designing</div>
<div class="b" style="left:397.7px;top:592.3px;width:90.80px;height:14.00px;background:#e8ebf6;border-radius:3px"></div>
<div class="t" style="left:401.40px;top:595.46px;font-size:10.32px;line-height:10.32px;color:#333;transform:scaleX(0.9260);transform-origin:0 0;">Ceasar Corporation</div>
<div class="b" style="left:501.7px;top:592.3px;width:45.20px;height:14.00px;background:#e8ebf6;border-radius:3px"></div>
<div class="t" style="left:505.40px;top:595.46px;font-size:10.32px;line-height:10.32px;color:#333;transform:scaleX(0.9153);transform-origin:0 0;">Invoice 2</div>
<div class="b" style="left:598.7px;top:592.3px;width:32.00px;height:14.00px;background:#e8ebf6;border-radius:3px"></div>
<div class="t" style="left:602.40px;top:595.46px;font-size:10.32px;line-height:10.32px;color:#333;transform:scaleX(0.8248);transform-origin:0 0;">Task 5</div>
<svg class="b" style="left:763px;top:595.1px" width="11" height="9" viewBox="0 0 11 9"><path d="M1 4.6 L4 7.4 L10 1.2" fill="none" stroke="#b8935d" stroke-width="1.8"/></svg>
<div class="t" style="left:899.27px;top:596.86px;font-size:10.32px;line-height:10.32px;color:#333;transform:scaleX(0.9100);transform-origin:0 0;">7,000$</div>
<div class="t" style="left:938.60px;top:596.86px;font-size:10.32px;line-height:10.32px;color:#333;transform:scaleX(0.9100);transform-origin:0 0;">10</div>
<svg class="b" style="left:94px;top:619px" width="8" height="8" viewBox="0 0 8 8"><path d="M4 0.5 V7.5 M0.5 4 H7.5" stroke="#333" stroke-width="1.4"/></svg>
<div class="b" style="left:74px;top:628px;width:164.00px;height:18.00px;background:#f9f9f9;border-top:1px solid #e3e3e3;box-sizing:border-box"></div>
<div class="b" style="left:238.5px;top:631.5px;width:775.50px;height:14.50px;background:#fafafa;border-top:1px solid #e6e6e6;box-sizing:border-box"></div>
<div class="t" style="left:79.00px;top:637.20px;font-size:9.45px;line-height:9.45px;color:#666;transform:scaleX(0.8626);transform-origin:0 0;">6 rows</div>
<div class="t" style="left:111.30px;top:637.20px;font-size:9.45px;line-height:9.45px;color:#666;transform:scaleX(0.8934);transform-origin:0 0;">4 - groups</div>
<div class="b" style="left:237px;top:163px;width:1.00px;height:483.00px;background:#d9d9d9"></div>
<div class="b" style="left:74px;top:644px;width:490.00px;height:2.50px;background:#ababab;border-radius:0 2px 0 0"></div>
<div class="b" style="left:1006.5px;top:137px;width:7.00px;height:404.00px;background:#b3b3b3;border-radius:4px"></div>
<div class="b" style="left:81.5px;top:615.5px;width:89px;height:21.5px;border-radius:11px;background:#e6e6e6;box-shadow:0 0 0 0.6px #dcdcdc;overflow:hidden"><div class="b" style="left:0;top:0;width:25px;height:100%;background:#fff"></div></div>
<svg class="b" style="left:88.5px;top:621px" width="11" height="11" viewBox="0 0 11 11"><path d="M5.5 0.8 V10.2 M0.8 5.5 H10.2" stroke="#555" stroke-width="2"/></svg>
<svg class="b" style="left:110.5px;top:620px" width="12" height="11" viewBox="0 0 12 11"><path d="M1.5 9.8 L8 3.3" stroke="#777" stroke-width="2.6" stroke-linecap="round"/><path d="M6.8 2 L9.5 4.6" stroke="#999" stroke-width="1"/><path d="M9.8 0.6 V2.2 M11.4 2.6 H9.8" stroke="#888" stroke-width="0.8"/></svg>
<div class="t" style="left:127.30px;top:621.09px;font-size:10.17px;line-height:10.17px;color:#444;-webkit-text-stroke:0.35px #444;transform:scaleX(1.0156);transform-origin:0 0;">Add...</div>
</div></div>
</body></html>
